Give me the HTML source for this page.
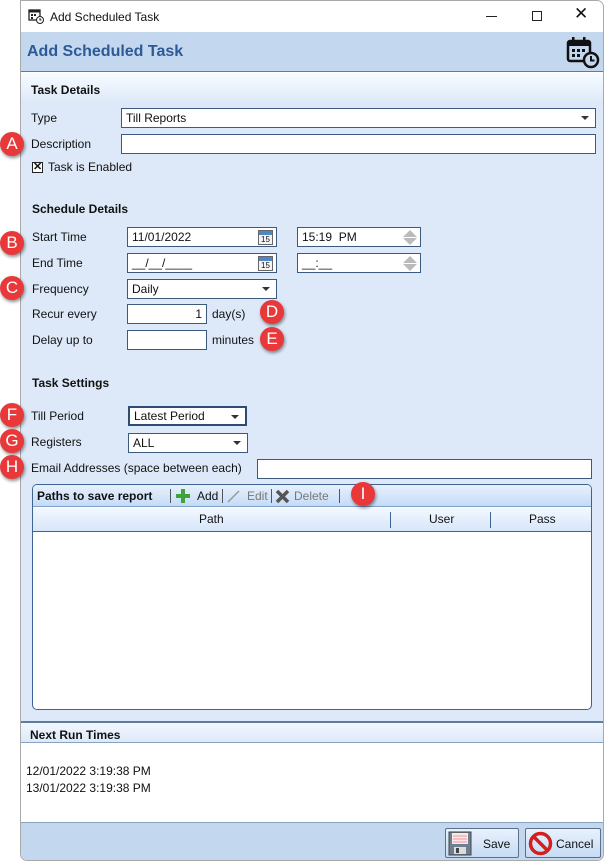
<!DOCTYPE html>
<html><head><style>
*{box-sizing:border-box;margin:0;padding:0}
body{width:606px;height:863px;background:#fff;position:relative;overflow:hidden;font-family:"Liberation Sans",Arial,sans-serif;font-size:12px;color:#111}
.a{position:absolute}
.win{left:20px;top:0;width:584px;height:861px;border:1px solid #a9a9a9;border-radius:0 7px 7px 7px;background:#fff;overflow:hidden}
.lbl{position:absolute;font-size:12px;line-height:14px;margin-top:-1px}
.b{font-weight:bold}
.inp{position:absolute;background:#fff;border:1px solid #3c5a7d;height:20px;line-height:18px;padding-left:4px;font-size:12px}
.arr{position:absolute;right:6px;top:7px;width:0;height:0;border-left:4px solid transparent;border-right:4px solid transparent;border-top:4px solid #333}
.badge{position:absolute;width:24px;height:24px;border-radius:50%;background:#e8383a;color:#fff;font-size:17px;text-align:center;line-height:24px;box-shadow:1px 2px 3px rgba(0,0,0,.45);font-family:"Liberation Sans",sans-serif}
.cal{position:absolute;right:3px;top:2px;width:15px;height:15px;border:1px solid #666;background:#f4f4f4;font-size:8px;text-align:center;line-height:17px}
.cal:before{content:"";position:absolute;left:0;top:0;width:13px;height:4px;background:#4f86c6}
.spin{position:absolute;right:3px;top:2px;width:0;height:0;border-left:7px solid transparent;border-right:7px solid transparent;border-bottom:7px solid #bbb}
.spin2{position:absolute;right:3px;top:10px;width:0;height:0;border-left:7px solid transparent;border-right:7px solid transparent;border-top:7px solid #bbb}
</style></head><body>
<div class="a win">
 <div class="a" style="left:0;top:0;width:584px;height:31px;background:#fff"></div>
 <svg class="a" style="left:7px;top:7px" width="16" height="16" viewBox="0 0 16 16"><rect x="1" y="2" width="11" height="10" fill="none" stroke="#222" stroke-width="1.3"/><rect x="1" y="2" width="11" height="2.5" fill="#222"/><rect x="3" y="6" width="2" height="2" fill="#222"/><rect x="6" y="6" width="2" height="2" fill="#222"/><rect x="3" y="9" width="2" height="2" fill="#222"/><circle cx="12" cy="12" r="3.5" fill="#fff" stroke="#222"/><path d="M12 10v2h1.5" stroke="#222" fill="none"/></svg>
 <div class="lbl" style="left:29px;top:10px;font-size:12px">Add Scheduled Task</div>
 <div class="a" style="left:465px;top:15px;width:11px;height:1px;background:#222"></div>
 <div class="a" style="left:511px;top:10px;width:10px;height:10px;border:1px solid #222"></div>
 <div class="lbl" style="left:553px;top:7px;font-size:17px">✕</div>
 <div class="a" style="left:0;top:31px;width:584px;height:40px;background:#c3d8ef;border-bottom:1px solid #5d7b9c"></div>
 <div class="lbl b" style="left:6px;top:43px;font-size:16px;line-height:18px;color:#2d5a96">Add Scheduled Task</div>
 <svg class="a" style="left:545px;top:34px" width="34" height="34" viewBox="0 0 34 34"><rect x="2" y="6" width="22" height="20" rx="2" fill="none" stroke="#111" stroke-width="2.5"/><rect x="2" y="6" width="22" height="5" fill="#111"/><rect x="6" y="2" width="2.5" height="6" fill="#111"/><rect x="17" y="2" width="2.5" height="6" fill="#111"/><rect x="6" y="14" width="3" height="3" fill="#111"/><rect x="11" y="14" width="3" height="3" fill="#111"/><rect x="16" y="14" width="3" height="3" fill="#111"/><rect x="6" y="19" width="3" height="3" fill="#111"/><rect x="11" y="19" width="3" height="3" fill="#111"/><circle cx="25" cy="25" r="7" fill="#c3d8ef" stroke="#111" stroke-width="2.5"/><path d="M25 21v4.5h3.5" stroke="#111" stroke-width="2" fill="none"/></svg>
 <div class="a" style="left:0;top:72px;width:584px;height:650px;background:linear-gradient(#f7fbff 0px,#dde9f8 30px,#dde9f8)"></div>

 <div class="lbl b" style="left:10px;top:83px">Task Details</div>
 <div class="lbl" style="left:10px;top:111px">Type</div>
 <div class="inp" style="left:100px;top:107px;width:475px">Till Reports<div class="arr"></div></div>
 <div class="lbl" style="left:10px;top:137px">Description</div>
 <div class="inp" style="left:100px;top:133px;width:475px"></div>
 <div class="a" style="left:11px;top:161px;width:11px;height:11px;border:1px solid #222;background:#fff;font-size:11px;line-height:9px;text-align:center;font-weight:bold">✕</div>
 <div class="lbl" style="left:27px;top:160px">Task is Enabled</div>

 <div class="lbl b" style="left:11px;top:202px">Schedule Details</div>
 <div class="lbl" style="left:11px;top:230px">Start Time</div>
 <div class="inp" style="left:106px;top:226px;width:150px">11/01/2022<div class="cal">15</div></div>
 <div class="inp" style="left:276px;top:226px;width:124px">15:19&nbsp; PM<div class="spin"></div><div class="spin2"></div></div>
 <div class="lbl" style="left:11px;top:256px">End Time</div>
 <div class="inp" style="left:106px;top:252px;width:150px">__/__/____<div class="cal">15</div></div>
 <div class="inp" style="left:276px;top:252px;width:124px">__:__<div class="spin"></div><div class="spin2"></div></div>
 <div class="lbl" style="left:11px;top:282px">Frequency</div>
 <div class="inp" style="left:106px;top:278px;width:150px">Daily<div class="arr"></div></div>
 <div class="lbl" style="left:11px;top:307px">Recur every</div>
 <div class="inp" style="left:106px;top:303px;width:80px;text-align:right;padding-right:4px">1</div>
 <div class="lbl" style="left:191px;top:307px">day(s)</div>
 <div class="lbl" style="left:11px;top:333px">Delay up to</div>
 <div class="inp" style="left:106px;top:329px;width:80px"></div>
 <div class="lbl" style="left:191px;top:333px">minutes</div>

 <div class="lbl b" style="left:11px;top:376px">Task Settings</div>
 <div class="lbl" style="left:10px;top:409px">Till Period</div>
 <div class="inp" style="left:107px;top:405px;width:119px;border:2px solid #2e4b70;line-height:16px">Latest Period<div class="arr"></div></div>
 <div class="lbl" style="left:10px;top:435px">Registers</div>
 <div class="inp" style="left:107px;top:432px;width:120px">ALL<div class="arr"></div></div>
 <div class="lbl" style="left:10px;top:461px">Email Addresses (space between each)</div>
 <div class="inp" style="left:236px;top:458px;width:335px"></div>

 <div class="a" style="left:11px;top:483px;width:560px;height:226px;border:1px solid #3f6494;border-radius:5px;background:#fff;overflow:hidden">
  <div class="a" style="left:0;top:0;width:560px;height:22px;background:linear-gradient(#e8f1fd,#c4dbf7);border-bottom:1px solid #7e9ec8"></div>
  <div class="lbl b" style="left:4px;top:5px">Paths to save report</div>
  <div class="a" style="left:137px;top:4px;width:1px;height:14px;background:#555"></div>
  <div class="a" style="left:143px;top:4px;width:14px;height:14px;background:linear-gradient(90deg,transparent 5px,#3fa33a 5px,#3fa33a 9px,transparent 9px),linear-gradient(transparent 5px,#3fa33a 5px,#3fa33a 9px,transparent 9px)"></div>
  <div class="lbl" style="left:164px;top:5px">Add</div>
  <div class="a" style="left:189px;top:4px;width:1px;height:14px;background:#555"></div>
  <svg class="a" style="left:193px;top:4px" width="14" height="14"><path d="M2 13L13 2" stroke="#999" stroke-width="1.5"/></svg>
  <div class="lbl" style="left:214px;top:5px;color:#777">Edit</div>
  <div class="a" style="left:238px;top:4px;width:1px;height:14px;background:#555"></div>
  <svg class="a" style="left:242px;top:4px" width="15" height="15"><path d="M2 2L13 13M13 2L2 13" stroke="#555" stroke-width="3.5"/></svg>
  <div class="lbl" style="left:261px;top:5px;color:#777">Delete</div>
  <div class="a" style="left:306px;top:4px;width:1px;height:14px;background:#555"></div>
  <div class="a" style="left:0;top:23px;width:560px;height:24px;background:linear-gradient(#f3f8ff,#d6e6fa);border-bottom:1px solid #3f6494"></div>
  <div class="lbl" style="left:166px;top:28px">Path</div>
  <div class="a" style="left:357px;top:27px;width:1px;height:16px;background:#3f6494"></div>
  <div class="lbl" style="left:396px;top:28px">User</div>
  <div class="a" style="left:457px;top:27px;width:1px;height:16px;background:#3f6494"></div>
  <div class="lbl" style="left:496px;top:28px">Pass</div>
 </div>

 <div class="a" style="left:0;top:720px;width:584px;height:2px;background:#5d7b9c"></div>
 <div class="a" style="left:0;top:722px;width:584px;height:20px;background:linear-gradient(#f2f7fe,#dde9f8);border-bottom:1px solid #8aa3c0"></div>
 <div class="lbl b" style="left:9px;top:728px">Next Run Times</div>
 <div class="a" style="left:0;top:742px;width:584px;height:80px;background:#fff;border-bottom:1px solid #8aa3c0"></div>
 <div class="lbl" style="left:5px;top:764px">12/01/2022 3:19:38 PM</div>
 <div class="lbl" style="left:5px;top:781px">13/01/2022 3:19:38 PM</div>
 <div class="a" style="left:0;top:822px;width:584px;height:40px;background:#c3d8ef"></div>
 <div class="a" style="left:424px;top:827px;width:74px;height:30px;border:1px solid #5a6f8a;border-radius:2px;background:linear-gradient(#e9f2fd,#c6dbf4)">
  <svg class="a" style="left:2px;top:2px" width="24" height="25" viewBox="0 0 24 25"><rect x="1" y="1" width="22" height="23" fill="#6f7f93" stroke="#444"/><rect x="4" y="2" width="16" height="11" fill="#fbe8e2"/><path d="M5 5h14M5 8h14M5 11h14" stroke="#e9a" stroke-width="1"/><rect x="6" y="16" width="12" height="7" fill="#ddd"/><rect x="8" y="17" width="3" height="5" fill="#444"/></svg>
  <div class="lbl" style="left:37px;top:9px">Save</div>
 </div>
 <div class="a" style="left:504px;top:827px;width:76px;height:30px;border:1px solid #5a6f8a;border-radius:2px;background:linear-gradient(#e9f2fd,#c6dbf4)">
  <svg class="a" style="left:2px;top:2px" width="25" height="25" viewBox="0 0 25 25"><circle cx="12.5" cy="12.5" r="10" fill="none" stroke="#d21f1f" stroke-width="3.5"/><path d="M5.5 5.5l14 14" stroke="#d21f1f" stroke-width="3.5"/></svg>
  <div class="lbl" style="left:30px;top:9px">Cancel</div>
 </div>
</div>

<div class="badge" style="left:0;top:132px">A</div>
<div class="badge" style="left:0;top:231px">B</div>
<div class="badge" style="left:0;top:276px">C</div>
<div class="badge" style="left:260px;top:300px">D</div>
<div class="badge" style="left:260px;top:327px">E</div>
<div class="badge" style="left:0;top:403px">F</div>
<div class="badge" style="left:0;top:429px">G</div>
<div class="badge" style="left:0;top:455px">H</div>
<div class="badge" style="left:351px;top:482px">I</div>
</body></html>
